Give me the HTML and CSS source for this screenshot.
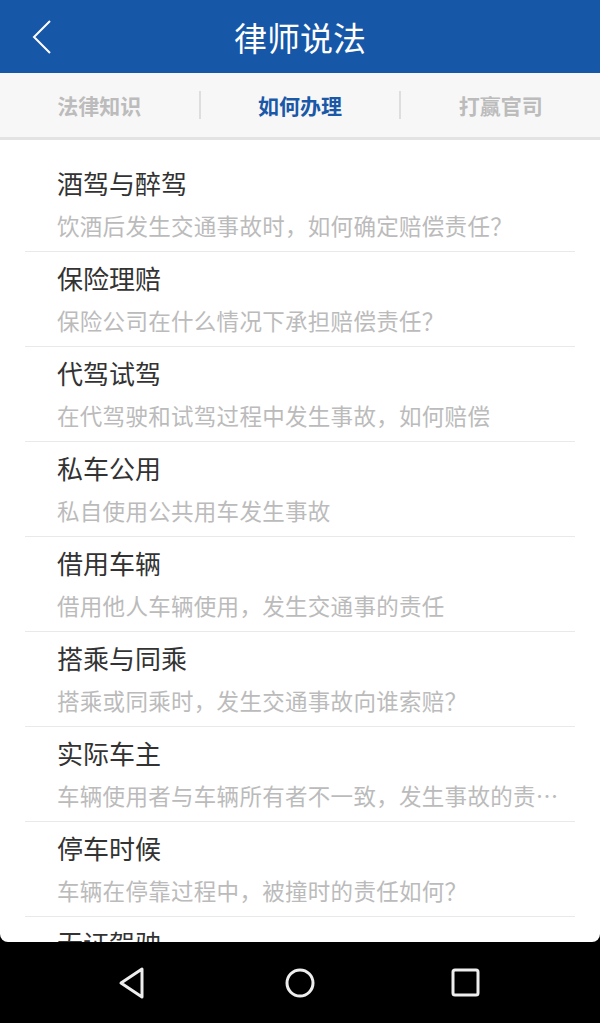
FILE: index.html
```html
<!DOCTYPE html>
<html lang="zh-CN">
<head>
<meta charset="utf-8">
<title>律师说法</title>
<link rel="stylesheet" href="styles.css">
</head>
<body>
<div class="screen">
  <header class="appbar">
    <div class="appbar-back">
      <svg width="24" height="36" viewBox="0 0 24 36"><path d="M18 2 L2 18 L18 34" fill="none" stroke="#fff" stroke-width="2"/></svg>
    </div>
    <h1 class="appbar-title">律师说法</h1>
    <div class="appbar-side"></div>
  </header>
  <nav class="tabs">
    <div class="tab">法律知识</div>
    <div class="tab tab-active">如何办理</div>
    <div class="tab">打赢官司</div>
  </nav>
  <ul class="list">
    <li class="item"><div class="item-title">酒驾与醉驾</div><div class="item-sub">饮酒后发生交通事故时，如何确定赔偿责任？</div></li>
    <li class="item"><div class="item-title">保险理赔</div><div class="item-sub">保险公司在什么情况下承担赔偿责任？</div></li>
    <li class="item"><div class="item-title">代驾试驾</div><div class="item-sub">在代驾驶和试驾过程中发生事故，如何赔偿</div></li>
    <li class="item"><div class="item-title">私车公用</div><div class="item-sub">私自使用公共用车发生事故</div></li>
    <li class="item"><div class="item-title">借用车辆</div><div class="item-sub">借用他人车辆使用，发生交通事的责任</div></li>
    <li class="item"><div class="item-title">搭乘与同乘</div><div class="item-sub">搭乘或同乘时，发生交通事故向谁索赔？</div></li>
    <li class="item"><div class="item-title">实际车主</div><div class="item-sub">车辆使用者与车辆所有者不一致，发生事故的责任如何承担？</div></li>
    <li class="item"><div class="item-title">停车时候</div><div class="item-sub">车辆在停靠过程中，被撞时的责任如何？</div></li>
    <li class="item"><div class="item-title">无证驾驶</div><div class="item-sub">无证驾驶发生交通事故，如何承担责任？</div></li>
  </ul>
</div>
<footer class="navbar">
  <svg class="nav-icon" width="40" height="40" viewBox="0 0 40 40"><path d="M28 6 L28 34 L7 20 Z" fill="none" stroke="#eee" stroke-width="3" stroke-linejoin="round"/></svg>
  <svg class="nav-icon" width="40" height="40" viewBox="0 0 40 40"><circle cx="20" cy="20" r="13" fill="none" stroke="#eee" stroke-width="3"/></svg>
  <svg class="nav-icon" width="40" height="40" viewBox="0 0 40 40"><rect x="7" y="7" width="25" height="25" rx="2" fill="none" stroke="#eee" stroke-width="3"/></svg>
</footer>
</body>
</html>
```
FILE: styles.css
```css
* { box-sizing: border-box; }
html, body {
  margin: 0;
  padding: 0;
  background: #000;
  font-family: "Noto Sans CJK SC", "Noto Sans", sans-serif;
}
.screen {
  height: 942px;
  overflow: hidden;
  background: #fff;
  border-radius: 0 0 8px 8px;
}
.appbar {
  height: 73px;
  background: #1757a7;
  display: grid;
  grid-template-columns: 90px 1fr 90px;
  align-items: center;
}
.appbar-back {
  padding-left: 32px;
  display: flex;
  align-items: center;
}
.appbar-title {
  margin: 0;
  text-align: center;
  color: #fff;
  font-size: 33px;
  font-weight: 400;
  line-height: 40px;
}
.tabs {
  height: 67px;
  background: #f7f7f7;
  border-bottom: 3px solid #e3e3e3;
  display: flex;
  align-items: center;
}
.tab {
  flex: 1;
  height: 28px;
  display: flex;
  align-items: center;
  justify-content: center;
  font-size: 21px;
  font-weight: 700;
  color: #bcbcbc;
}
.tab + .tab { border-left: 2px solid #dedede; }
.tab-active { color: #1a58a8; }
.list {
  list-style: none;
  margin: 0 25px;
  padding: 17px 0 0;
}
.item {
  padding: 10px 8px 11px 32px;
  border-bottom: 1px solid #e9e9e9;
}
.item-title {
  font-size: 26px;
  line-height: 32px;
  color: #333;
}
.item-sub {
  margin-top: 11px;
  font-size: 22.5px;
  line-height: 30px;
  letter-spacing: 0.3px;
  color: #bbb;
  white-space: nowrap;
  overflow: hidden;
  text-overflow: ellipsis;
}
.navbar {
  height: 81px;
  background: #000;
  display: flex;
  align-items: center;
  justify-content: center;
  gap: 126px;
}
.nav-icon { display: block; }
```
